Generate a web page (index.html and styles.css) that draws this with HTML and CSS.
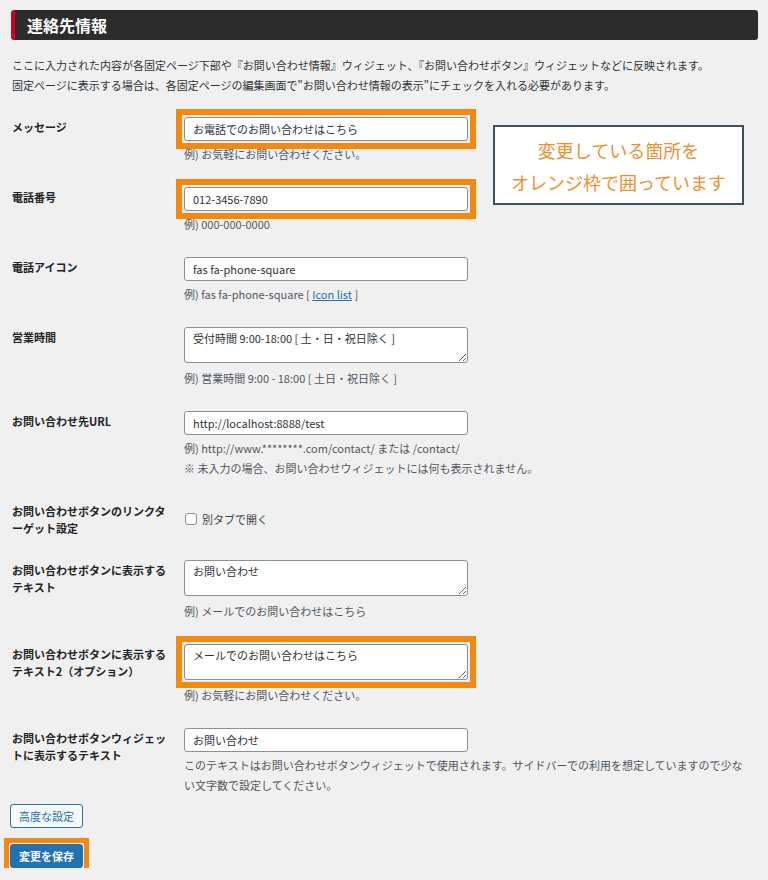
FILE: index.html
```html
<!DOCTYPE html>
<html lang="ja">
<head>
<meta charset="utf-8">
<title>連絡先情報</title>
<link rel="stylesheet" href="styles.css">
</head>
<body>

<h2 class="section-title">連絡先情報</h2>

<p class="intro">ここに入力された内容が各固定ページ下部や『お問い合わせ情報』ウィジェット、『お問い合わせボタン』ウィジェットなどに反映されます。<br>
固定ページに表示する場合は、各固定ページの編集画面で"お問い合わせ情報の表示"にチェックを入れる必要があります。</p>

<div class="form-table">
	<div class="row">
		<div class="label">メッセージ</div>
		<div class="field">
			<div class="mark"><input class="text" type="text" value="お電話でのお問い合わせはこちら"></div>
			<p class="desc">例) お気軽にお問い合わせください。</p>
		</div>
	</div>
	<div class="row">
		<div class="label">電話番号</div>
		<div class="field">
			<div class="mark"><input class="text" type="text" value="012-3456-7890"></div>
			<p class="desc">例) 000-000-0000</p>
		</div>
	</div>
	<div class="row">
		<div class="label">電話アイコン</div>
		<div class="field">
			<input class="text" type="text" value="fas fa-phone-square">
			<p class="desc">例) fas fa-phone-square [ <a href="#">Icon list</a> ]</p>
		</div>
	</div>
	<div class="row">
		<div class="label">営業時間</div>
		<div class="field">
			<textarea class="area">受付時間 9:00-18:00 [ 土・日・祝日除く ]</textarea>
			<p class="desc">例) 営業時間 9:00 - 18:00 [ 土日・祝日除く ]</p>
		</div>
	</div>
	<div class="row">
		<div class="label">お問い合わせ先URL</div>
		<div class="field">
			<input class="text" type="text" value="http://localhost:8888/test">
			<p class="desc">例) http://www.********.com/contact/ または /contact/<br>
			※ 未入力の場合、お問い合わせウィジェットには何も表示されません。</p>
		</div>
	</div>
	<div class="row row-middle">
		<div class="label">お問い合わせボタンのリンクターゲット設定</div>
		<div class="field">
			<label class="check"><input type="checkbox"> 別タブで開く</label>
		</div>
	</div>
	<div class="row">
		<div class="label">お問い合わせボタンに表示するテキスト</div>
		<div class="field">
			<textarea class="area">お問い合わせ</textarea>
			<p class="desc">例) メールでのお問い合わせはこちら</p>
		</div>
	</div>
	<div class="row">
		<div class="label">お問い合わせボタンに表示するテキスト2（オプション）</div>
		<div class="field">
			<div class="mark"><textarea class="area">メールでのお問い合わせはこちら</textarea></div>
			<p class="desc">例) お気軽にお問い合わせください。</p>
		</div>
	</div>
	<div class="row">
		<div class="label">お問い合わせボタンウィジェットに表示するテキスト</div>
		<div class="field">
			<input class="text" type="text" value="お問い合わせ">
			<p class="desc">このテキストはお問い合わせボタンウィジェットで使用されます。サイドバーでの利用を想定していますので少ない文字数で設定してください。</p>
		</div>
	</div>
</div>

<div class="actions">
	<button class="button" type="button">高度な設定</button>
	<div class="mark mark-button"><button class="button primary" type="button">変更を保存</button></div>
</div>

<div class="callout">変更している箇所を<br>オレンジ枠で囲っています</div>

</body>
</html>
```

FILE: styles.css
```css
body {
	margin : 0 ;
	padding : 10px 0 0 ;
	background : #f0f0f1 ;
	color : #1d2327 ;
	font-family : "Noto Sans CJK JP", "Noto Sans", sans-serif ;
	font-size : 11px ;
	position : relative ;
	}

/* section header */
.section-title {
	margin : 0 10px 0 11px ;
	height : 30px ;
	line-height : 30px ;
	padding-left : 12px ;
	background : #2c2c2c ;
	border-left : 4px solid #d4001a ;
	border-radius : 3px ;
	color : #fff ;
	font-size : 16px ;
	font-weight : bold ;
	}

.intro {
	margin : 15px 0 0 ;
	padding : 0 12px ;
	line-height : 20px ;
	color : #2c3338 ;
	}

/* form rows */
.form-table {
	display : flex ;
	flex-direction : column ;
	gap : 23px ;
	padding : 22px 0 0 12px ;
	}
.row {
	display : grid ;
	grid-template-columns : 160px 566px ;
	column-gap : 12px ;
	}
.row-middle {
	align-items : center ;
	}
.label {
	padding-top : 2px ;
	line-height : 17px ;
	font-weight : bold ;
	color : #1d2327 ;
	}
.field {
	min-width : 0 ;
	}
.text, .area {
	display : block ;
	box-sizing : border-box ;
	width : 284px ;
	margin : 0 ;
	padding : 0 8px ;
	border : 1px solid #8c8f94 ;
	border-radius : 3px ;
	background : #fff ;
	color : #2c3338 ;
	font : inherit ;
	}
.text {
	height : 24px ;
	}
.area {
	height : 36px ;
	padding-top : 2px ;
	line-height : 17px ;
	resize : vertical ;
	margin-bottom : 5px ;
	}
.desc {
	margin : 3px 0 0 ;
	line-height : 20px ;
	color : #50575e ;
	}
.desc a {
	color : #2271b1 ;
	}
.check {
	display : flex ;
	align-items : center ;
	gap : 5px ;
	color : #3c434a ;
	}
.check input {
	appearance : none ;
	width : 12px ;
	height : 12px ;
	margin : 0 0 0 1px ;
	border : 1px solid #8c8f94 ;
	border-radius : 3px ;
	background : #fff ;
	}

/* highlighted fields */
.mark {
	width : fit-content ;
	outline : 6px solid #f5880f ;
	outline-offset : 2px ;
	}
.mark-button {
	outline-width : 5px ;
	outline-offset : 1px ;
	}

/* buttons */
.actions {
	display : flex ;
	flex-direction : column ;
	align-items : flex-start ;
	gap : 16px ;
	padding : 9px 0 0 10px ;
	}
.button {
	display : block ;
	height : 24px ;
	padding : 0 8px ;
	border : 1px solid #2271b1 ;
	border-radius : 3px ;
	background : #f6f7f7 ;
	color : #2271b1 ;
	font : inherit ;
	}
.button.primary {
	background : #2271b1 ;
	color : #fff ;
	font-weight : bold ;
	}

/* annotation laid over the page */
.callout {
	position : absolute ;
	left : 493px ;
	top : 125px ;
	box-sizing : border-box ;
	width : 251px ;
	height : 80px ;
	padding-top : 7px ;
	border : 2px solid #3e525b ;
	background : #fff ;
	color : #ec8f2e ;
	font-size : 18px ;
	line-height : 32px ;
	text-align : center ;
	}
```
